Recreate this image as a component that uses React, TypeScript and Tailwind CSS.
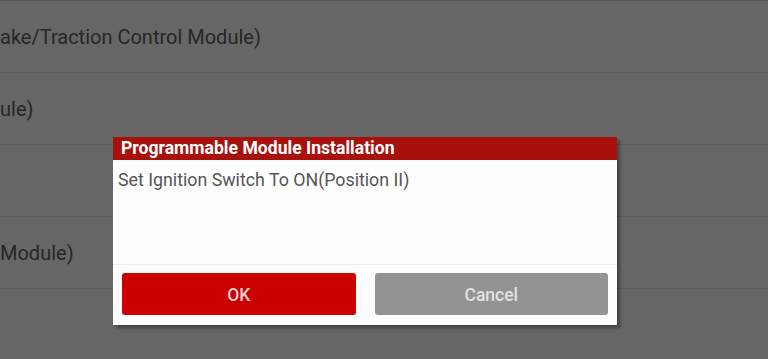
const ROWS = ['ake/Traction Control Module)', 'ule)', '', 'Module)', '']

export default function App() {
  return (
    <div className="relative h-[359px] w-full overflow-hidden bg-[#666666] font-['Roboto',sans-serif]">
      <div className="h-px bg-[#555555]" />
      {ROWS.map((label, i) => (
        <div
          key={i}
          className="flex h-[72px] items-center border-b border-[#5e5e5e] text-[20px] text-[#262626]"
        >
          {label}
        </div>
      ))}

      <div className="absolute left-[113px] top-[137px] flex w-[504px] flex-col bg-[#fdfdfd] shadow-[3px_3px_3px_rgba(0,0,0,0.35)]">
        <div className="flex h-[23px] items-center bg-[#a8100c] px-2 text-[17.6px] font-bold text-white">
          Programmable Module Installation
        </div>
        <div className="h-[105px] border-b border-[#ececec] px-[5px] pt-[10px] text-[17.8px] leading-5 text-[#555555]">
          Set Ignition Switch To ON(Position II)
        </div>
        <div className="flex gap-[19px] px-[9px] pb-[10px] pt-[8px]">
          <button className="flex h-[42px] flex-1 items-center justify-center rounded-[3px] bg-[#cc0000] pt-[3px] text-[17.5px] font-medium text-[#f6d2d2]">
            OK
          </button>
          <button className="flex h-[42px] flex-1 items-center justify-center rounded-[3px] bg-[#939393] pt-[3px] text-[17.5px] font-medium text-[#e2e2e2]">
            Cancel
          </button>
        </div>
      </div>
    </div>
  )
}
